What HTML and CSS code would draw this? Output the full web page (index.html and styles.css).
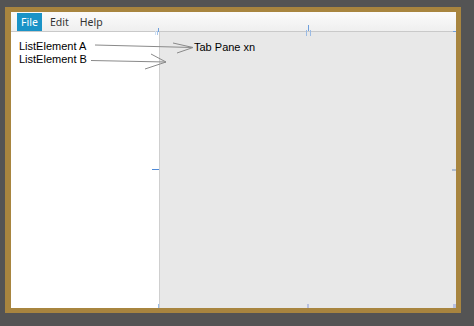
FILE: index.html
```html
<!DOCTYPE html>
<html>
<head>
<meta charset="utf-8">
<title>Tab Pane</title>
<link rel="stylesheet" href="styles.css">
</head>
<body>
<div class="frame">
  <div class="window">
    <div class="menubar">
      <span class="menu active">File</span>
      <span class="menu">Edit</span>
      <span class="menu">Help</span>
    </div>
    <div class="content">
      <div class="list">
        <div class="item">ListElement A</div>
        <div class="item">ListElement B</div>
      </div>
      <div class="pane">
        <div class="pane-label">Tab Pane xn</div>
      </div>
    </div>

    <!-- guide markers -->
    <span class="mark mark-corner"></span>
    <span class="mark mark-top"></span>
    <span class="mark mark-topright"></span>
    <span class="mark mark-mid"></span>
    <span class="mark mark-right"></span>
    <span class="mark mark-bl"></span>
    <span class="mark mark-bm"></span>
    <span class="mark mark-br"></span>

    <svg class="arrows" width="445" height="296" viewBox="11 12 445 296">
      <g stroke="#8a8a8a" stroke-width="1" fill="none">
        <line x1="95" y1="45" x2="193" y2="47.5"/>
        <line x1="173" y1="43" x2="193" y2="47.5"/>
        <line x1="177" y1="53" x2="193" y2="47.5"/>
        <line x1="91" y1="60.5" x2="166" y2="62"/>
        <line x1="151" y1="54" x2="166" y2="62"/>
        <line x1="145" y1="69" x2="166" y2="62"/>
      </g>
    </svg>
  </div>
</div>
</body>
</html>
```

FILE: styles.css
```css
* {
  box-sizing: border-box;
}

body {
  margin: 0;
  padding: 7px 0 0 5px;
  background-color: #545454;
  width: 474px;
  height: 326px;
  overflow: hidden;
}

.frame {
  width: 456px;
  height: 306px;
  display: flex;
  background-color: #a8853f;
  border-style: solid;
  border-color: #a8853f;
  border-width: 5px 5px 5px 6px;
}

.window {
  position: relative;
  flex: 1;
  display: flex;
  flex-direction: column;
  background-color: #fff;
  overflow: hidden;
}

.menubar {
  height: 20px;
  flex: none;
  display: flex;
  align-items: stretch;
  padding-left: 6px;
  background: linear-gradient(#fbfbfb, #efefef);
  border-bottom: 1px solid #c9c9c9;
  font-family: "Noto Sans", "Open Sans", sans-serif;
  font-size: 10.5px;
  color: #333;
}

.menu {
  display: flex;
  align-items: center;
  padding: 0 3px 0 8px;
}

.menu.active {
  width: 25px;
  margin-top: 1px;
  padding: 0;
  justify-content: center;
  background-color: #1a93c7;
  color: #fff;
}

.content {
  flex: 1;
  display: flex;
  font-family: "Liberation Sans", Arial, sans-serif;
  font-size: 11px;
  color: #000;
}

.list {
  width: 149px;
  border-right: 1px solid #cfcfcf;
  background-color: #fff;
  padding: 8px 0 0 8px;
}

.item {
  line-height: 13px;
}

.pane {
  flex: 1;
  background-color: #e8e8e8;
  padding: 9px 0 0 34px;
}

.pane-label {
  line-height: 13px;
}

.mark {
  position: absolute;
  background-color: #6e9fdc;
}

.mark-corner {
  left: 147px;
  top: 16px;
  width: 1px;
  height: 4px;
  box-shadow: -1px 3px 0 #a9c6ea, -3px 3px 0 #cfe0f4;
}

.mark-top {
  left: 297px;
  top: 13px;
  width: 1px;
  height: 6px;
  box-shadow: -2px 5px 0 #9bbbe4, 2px 5px 0 #9bbbe4;
}

.mark-topright {
  left: 442px;
  top: 19px;
  width: 3px;
  height: 1px;
}

.mark-mid {
  left: 141px;
  top: 157px;
  width: 7px;
  height: 1px;
  background-color: #4f8ad8;
}

.mark-right {
  left: 441px;
  top: 157px;
  width: 4px;
  height: 2px;
  background-color: #8aa0c0;
  opacity: 0.6;
}

.mark-bl {
  left: 147px;
  top: 292px;
  width: 1px;
  height: 4px;
  opacity: 0.7;
}

.mark-bm {
  left: 296px;
  top: 292px;
  width: 2px;
  height: 4px;
  background-color: #9aa6d8;
  opacity: 0.6;
}

.mark-br {
  left: 442px;
  top: 292px;
  width: 3px;
  height: 4px;
  background-color: #9aa6d8;
  opacity: 0.6;
}

.arrows {
  position: absolute;
  left: 0;
  top: 0;
  pointer-events: none;
}
```
